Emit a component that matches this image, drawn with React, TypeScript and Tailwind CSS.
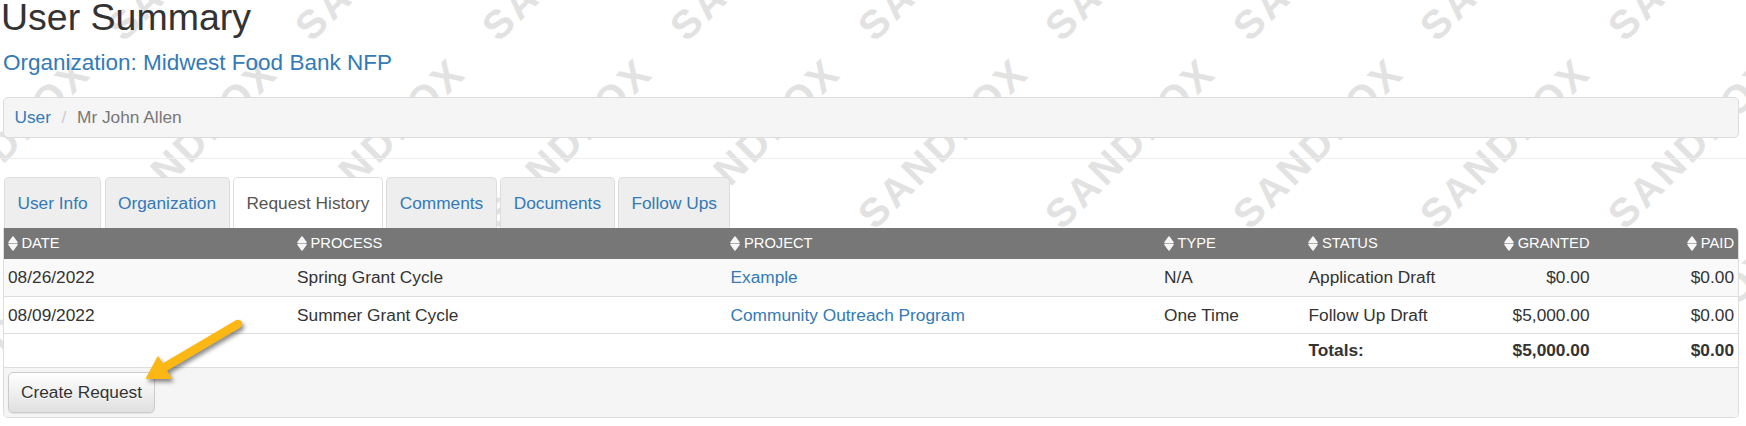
const rows = [
  {
    date: '08/26/2022',
    process: 'Spring Grant Cycle',
    project: 'Example',
    type: 'N/A',
    status: 'Application Draft',
    granted: '$0.00',
    paid: '$0.00',
  },
  {
    date: '08/09/2022',
    process: 'Summer Grant Cycle',
    project: 'Community Outreach Program',
    type: 'One Time',
    status: 'Follow Up Draft',
    granted: '$5,000.00',
    paid: '$0.00',
  },
]

const columns = [
  { label: 'DATE', right: false },
  { label: 'PROCESS', right: false },
  { label: 'PROJECT', right: false },
  { label: 'TYPE', right: false },
  { label: 'STATUS', right: false },
  { label: 'GRANTED', right: true },
  { label: 'PAID', right: true },
]

const tabs = ['User Info', 'Organization', 'Request History', 'Comments', 'Documents', 'Follow Ups']

const grid = 'grid grid-cols-[2fr_3fr_3fr_1fr_1fr_1fr_1fr]'

function SortIcon() {
  return (
    <svg width="10" height="15" viewBox="0 0 10 15" className="shrink-0 mr-[4px]">
      <path d="M1 6.4 L5 1 L9 6.4 Z" fill="#f6f6f6" stroke="#f6f6f6" strokeWidth="1.5" strokeLinejoin="round" />
      <path d="M1 8.6 L9 8.6 L5 14 Z" fill="#f6f6f6" stroke="#f6f6f6" strokeWidth="1.5" strokeLinejoin="round" />
    </svg>
  )
}

function Watermark() {
  const marks: { x: number; y: number; key: string }[] = []
  for (let j = -1; j <= 2; j++) {
    for (let i = -6; i <= 5; i++) {
      marks.push({ x: 942.5 + i * 187.6, y: 143 + j * 187.6, key: `${i}-${j}` })
    }
  }
  return (
    <div className="absolute inset-0 overflow-hidden pointer-events-none">
      {marks.map((m) => (
        <div key={m.key} className="absolute" style={{ left: m.x, top: m.y }}>
          <div className="-translate-x-1/2 -translate-y-1/2 -rotate-45 whitespace-nowrap text-[40px] leading-none font-bold tracking-[3px] text-[#e2e2e2]">
            SANDBOX
          </div>
        </div>
      ))}
    </div>
  )
}

function Arrow() {
  return (
    <svg
      width="1746"
      height="426"
      className="absolute left-0 top-0 z-20 pointer-events-none drop-shadow-[2px_3px_2px_rgba(0,0,0,0.45)]"
    >
      <line x1="238" y1="324" x2="165" y2="367" stroke="#fbb714" strokeWidth="8.5" strokeLinecap="round" />
      <polygon
        points="147,378 158.1,357.5 170.3,378.1"
        fill="#fbb714"
        stroke="#fbb714"
        strokeWidth="2"
        strokeLinejoin="round"
      />
    </svg>
  )
}

export default function App() {
  return (
    <div className="relative w-[1746px] h-[426px] overflow-hidden bg-white text-[#333] font-['Liberation_Sans',Arial,Helvetica,sans-serif]">
      <Watermark />

      <div className="relative z-10">
        <div className="pl-[3px] pr-[7px]">
          <h2 className="mt-[-3px] ml-[-2px] text-[37.5px] leading-[1.1] text-[#333]">User Summary</h2>
          <h4 className="mt-[12.5px] text-[22.5px] leading-[1.1] text-[#337ab7]">
            Organization: Midwest Food Bank NFP
          </h4>

          <div className="mt-[21.5px] flex items-center h-[41px] pl-[10.5px] border border-[#dcdcdc] bg-[#f5f5f5] rounded-[5px] text-[17.3px] leading-[25px]">
            <span className="text-[#337ab7]">User</span>
            <span className="px-[10.6px] text-[#ccc]">/</span>
            <span className="text-[#777]">Mr John Allen</span>
          </div>
        </div>

        <div className="mt-[20px] h-px bg-[#eeeeee]" />

        <div className="pl-[3px] pr-[7px] mt-[18.3px]">
          <div className="flex gap-[3.4px] pl-px text-[17.3px] leading-[25px]">
            {tabs.map((t) => (
              <div
                key={t}
                className={
                  t === 'Request History'
                    ? 'h-[51px] px-[12.5px] pt-[12.5px] border border-b-0 border-[#ddd] rounded-t-[5px] bg-white text-[#555]'
                    : 'h-[51px] px-[12.5px] pt-[12.5px] border border-b-0 border-[#ddd] rounded-t-[5px] bg-[#eee] text-[#337ab7]'
                }
              >
                {t}
              </div>
            ))}
          </div>

          <div className="border-x border-b border-[#ddd] rounded-tr-[4px] rounded-b-[5px] overflow-hidden">
            <div className={`${grid} h-[31px] bg-[#777] text-white text-[14.7px] leading-[21px]`}>
              {columns.map((c) => (
                <div
                  key={c.label}
                  className={c.right ? 'flex items-center justify-end pr-[4px]' : 'flex items-center pl-[3.5px]'}
                >
                  <SortIcon />
                  <span>{c.label}</span>
                </div>
              ))}
            </div>

            {rows.map((r, idx) => (
              <div
                key={r.date}
                className={
                  idx === 0
                    ? `${grid} h-[38px] items-center border-b border-[#ddd] bg-[#f9f9f9] text-[17.3px] leading-[25px]`
                    : `${grid} h-[37px] items-center border-b border-[#ddd] bg-white text-[17.3px] leading-[25px]`
                }
              >
                <div className="px-[4px]">{r.date}</div>
                <div className="px-[4px]">{r.process}</div>
                <div className="px-[4px] text-[#337ab7]">{r.project}</div>
                <div className="px-[4px]">{r.type}</div>
                <div className="px-[4px]">{r.status}</div>
                <div className="px-[4px] text-right">{r.granted}</div>
                <div className="px-[4px] text-right">{r.paid}</div>
              </div>
            ))}

            <div className={`${grid} h-[34px] items-center border-b border-[#ddd] bg-white text-[17.3px] leading-[25px] font-bold`}>
              <div />
              <div />
              <div />
              <div />
              <div className="px-[4px]">Totals:</div>
              <div className="px-[4px] text-right">$5,000.00</div>
              <div className="px-[4px] text-right">$0.00</div>
            </div>

            <div className="bg-[#f5f5f5] px-[4px] py-[4px]">
              <button className="h-[41px] px-[12px] border border-[#ccc] rounded-[5px] bg-linear-to-b from-white to-[#e0e0e0] text-[17.3px] leading-[25px] text-[#333] shadow-[inset_0_1px_0_rgba(255,255,255,0.15),0_1px_1px_rgba(0,0,0,0.075)] [text-shadow:0_1px_0_#fff]">
                Create Request
              </button>
            </div>
          </div>
        </div>
      </div>

      <Arrow />
    </div>
  )
}
